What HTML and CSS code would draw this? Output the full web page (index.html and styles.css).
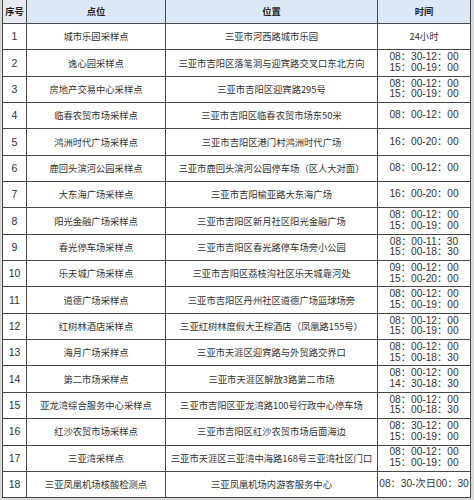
FILE: index.html
```html
<!DOCTYPE html>
<html lang="zh-CN">
<head>
<meta charset="utf-8">
<title>采样点</title>
<link rel="stylesheet" href="styles.css">
</head>
<body>
<div class="table">
  <div class="cell hd hd-no">序号</div><div class="cell hd">点位</div><div class="cell hd">位置</div><div class="cell hd">时间</div>

  <div class="cell no">1</div><div class="cell">城市乐园采样点</div><div class="cell">三亚市河西路城市乐园</div><div class="cell">24小时</div>
  <div class="cell no">2</div><div class="cell">逸心园采样点</div><div class="cell">三亚市吉阳区落笔洞与迎宾路交叉口东北方向</div><div class="cell time"><span>08：30-12：00</span><span>15：00-19：00</span></div>
  <div class="cell no">3</div><div class="cell">房地产交易中心采样点</div><div class="cell">三亚市吉阳区迎宾路295号</div><div class="cell time"><span>08：00-12：00</span><span>15：00-19：00</span></div>
  <div class="cell no">4</div><div class="cell">临春农贸市场采样点</div><div class="cell">三亚市吉阳区临春农贸市场东50米</div><div class="cell time"><span>08：00-12：00</span></div>
  <div class="cell no">5</div><div class="cell">鸿洲时代广场采样点</div><div class="cell">三亚市吉阳区港门村鸿洲时代广场</div><div class="cell time"><span>16：00-20：00</span></div>
  <div class="cell no">6</div><div class="cell">鹿回头滨河公园采样点</div><div class="cell">三亚市鹿回头滨河公园停车场（区人大对面）</div><div class="cell time"><span>08：00-12：00</span></div>
  <div class="cell no">7</div><div class="cell">大东海广场采样点</div><div class="cell">三亚市吉阳榆亚路大东海广场</div><div class="cell time"><span>16：00-20：00</span></div>
  <div class="cell no">8</div><div class="cell">阳光金融广场采样点</div><div class="cell">三亚市吉阳区新月社区阳光金融广场</div><div class="cell time"><span>08：00-12：00</span><span>15：00-19：00</span></div>
  <div class="cell no">9</div><div class="cell">春光停车场采样点</div><div class="cell">三亚市吉阳区春光路停车场旁小公园</div><div class="cell time"><span>08：00-11：30</span><span>15：00-18：30</span></div>
  <div class="cell no">10</div><div class="cell">乐天城广场采样点</div><div class="cell">三亚市吉阳区荔枝沟社区乐天城靠河处</div><div class="cell time"><span>09：00-12：00</span><span>15：00-20：00</span></div>
  <div class="cell no">11</div><div class="cell">道德广场采样点</div><div class="cell">三亚市吉阳区丹州社区道德广场篮球场旁</div><div class="cell time"><span>08：00-12：00</span><span>15：00-19：00</span></div>
  <div class="cell no">12</div><div class="cell">红树林酒店采样点</div><div class="cell">三亚红树林度假大王棕酒店（凤凰路155号）</div><div class="cell time"><span>08：00-12：00</span><span>15：00-19：00</span></div>
  <div class="cell no">13</div><div class="cell">海月广场采样点</div><div class="cell">三亚市天涯区迎宾路与外贸路交界口</div><div class="cell time"><span>08：00-12：00</span><span>15：00-18：30</span></div>
  <div class="cell no">14</div><div class="cell">第二市场采样点</div><div class="cell">三亚市天涯区解放3路第二市场</div><div class="cell time"><span>08：00-12：00</span><span>14：30-18：30</span></div>
  <div class="cell no">15</div><div class="cell">亚龙湾综合服务中心采样点</div><div class="cell">三亚市吉阳区亚龙湾路100号行政中心停车场</div><div class="cell time"><span>08：00-12：00</span><span>15：00-18：30</span></div>
  <div class="cell no">16</div><div class="cell">红沙农贸市场采样点</div><div class="cell">三亚市吉阳区红沙农贸市场后面海边</div><div class="cell time"><span>08：30-12：00</span><span>15：00-19：00</span></div>
  <div class="cell no">17</div><div class="cell">三亚湾采样点</div><div class="cell">三亚市天涯区三亚湾中海路168号三亚湾社区门口</div><div class="cell time"><span>08：00-12：00</span><span>15：00-19：00</span></div>
  <div class="cell no">18</div><div class="cell">三亚凤凰机场核酸检测点</div><div class="cell">三亚凤凰机场内游客服务中心</div><div class="cell time"><span>08：30-次日00：30</span></div>
</div>
</body>
</html>
```

FILE: styles.css
```css
html, body {
  margin: 0;
  padding: 0;
  background: #d9d9d9;
}

body {
  font-family: "Noto Sans CJK SC", sans-serif;
  color: #333;
}

.table {
  margin-left: 2px;
  width: 467px;
  display: grid;
  grid-template-columns: 23px 138px 211px 92px;
  grid-template-rows: 23px repeat(18, 25.35px);
  column-gap: 1px;
  row-gap: 1px;
  background: #484848;
  border-left: 1px solid #484848;
  border-right: 1px solid #484848;
  border-bottom: 1px solid #484848;
}

.cell {
  background: #fff;
  display: flex;
  flex-direction: column;
  align-items: center;
  justify-content: center;
  text-align: center;
  font-size: 9.3px;
  line-height: 11px;
  white-space: nowrap;
  overflow: hidden;
  min-width: 0;
}

.hd {
  background: #dce8f5;
  font-weight: 700;
  color: #222;
}

.hd-no {
  background: #e5ebf1;
}

.no {
  font-family: "Liberation Sans", "Noto Sans CJK SC", sans-serif;
  font-size: 10.5px;
}

.time {
  font-family: "Liberation Sans", "Noto Sans CJK SC", sans-serif;
  font-size: 10.2px;
  line-height: 10.7px;
}

.time span {
  display: block;
}
```
